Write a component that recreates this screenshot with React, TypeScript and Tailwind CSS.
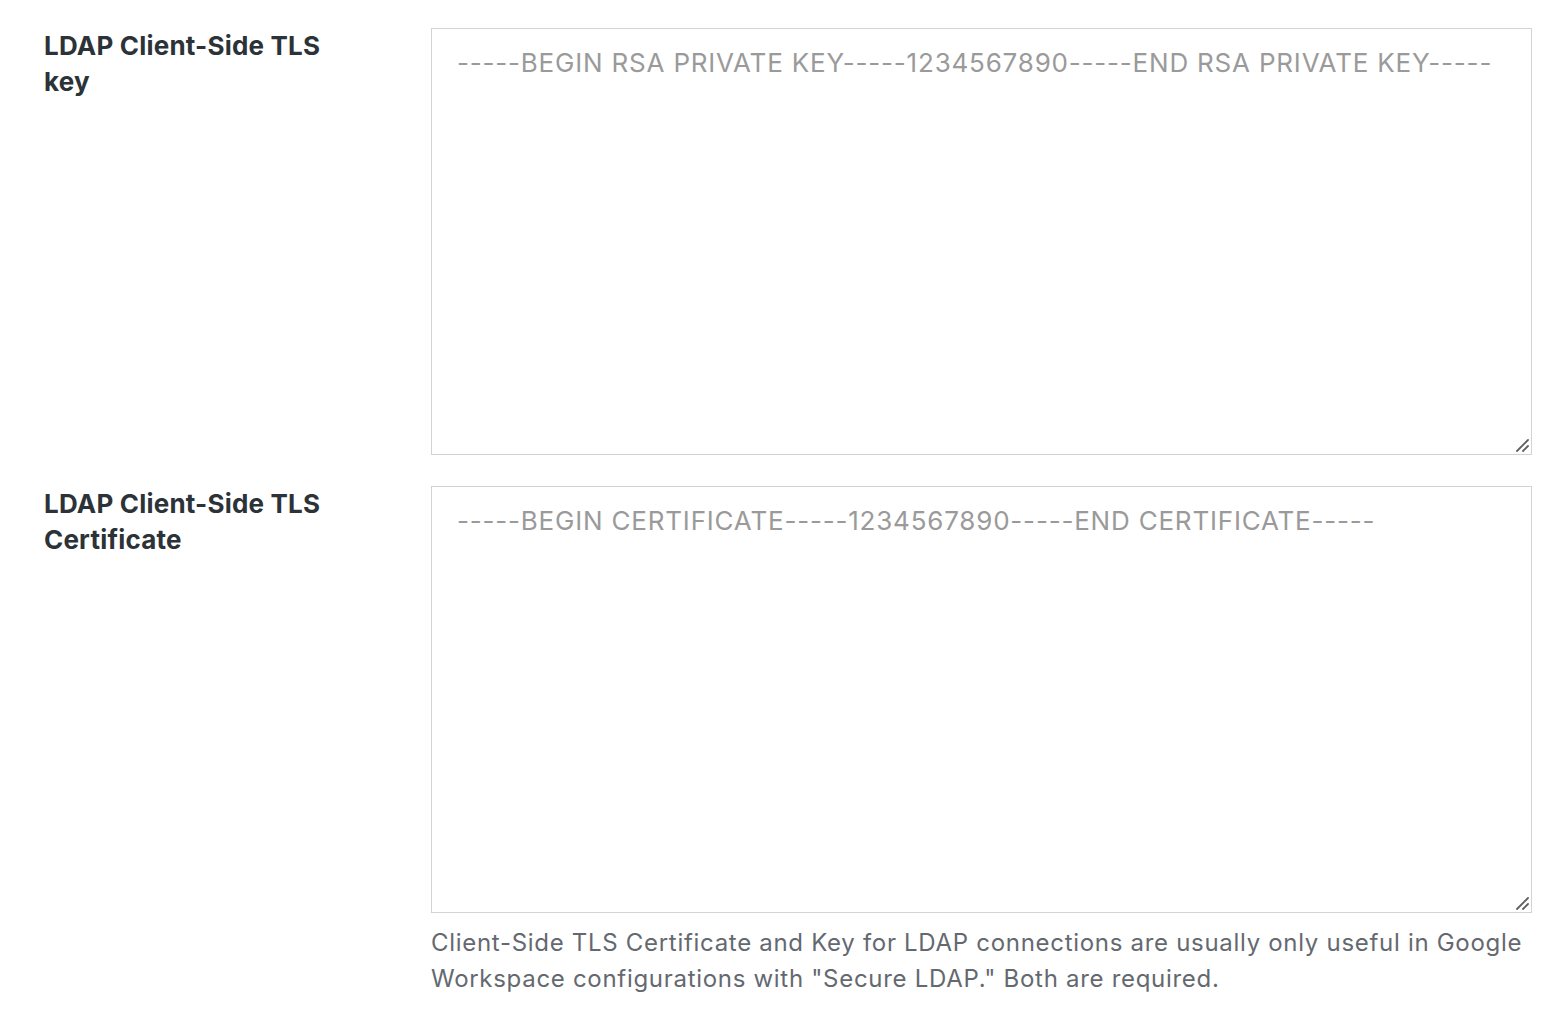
function ResizeGrip() {
  return (
    <svg
      className="pointer-events-none absolute bottom-[3px] right-[3px]"
      width="14"
      height="14"
      viewBox="0 0 14 14"
    >
      <path d="M2 13 L13 2 M8 13 L13 8" stroke="#5f5f5f" strokeWidth="1.8" strokeLinecap="round" />
    </svg>
  )
}

function KeyArea({ placeholder }: { placeholder: string }) {
  return (
    <div className="relative w-[1101px]">
      <textarea
        className="block h-[427px] w-[1101px] resize-none border border-[#d0d3d8] px-[25px] py-[16px] text-[26px] leading-[36px] tracking-[0.8px] text-[#2c3338] outline-none placeholder:text-[#9a9a9a]"
        placeholder={placeholder}
      />
      <ResizeGrip />
    </div>
  )
}

export default function App() {
  return (
    <div className="min-h-screen bg-white pl-[44px] pt-[28px] font-['Inter',sans-serif] text-[#2c3338]">
      <div className="flex">
        <div className="w-[387px] shrink-0 pr-[80px] text-[26px] font-bold leading-[36px] tracking-[0.2px] text-[#2c3338]">
          LDAP Client-Side TLS key
        </div>
        <KeyArea placeholder="-----BEGIN RSA PRIVATE KEY-----1234567890-----END RSA PRIVATE KEY-----" />
      </div>
      <div className="mt-[31px] flex">
        <div className="w-[387px] shrink-0 pr-[80px] text-[26px] font-bold leading-[36px] tracking-[0.2px] text-[#2c3338]">
          LDAP Client-Side TLS Certificate
        </div>
        <div className="w-[1101px]">
          <KeyArea placeholder="-----BEGIN CERTIFICATE-----1234567890-----END CERTIFICATE-----" />
          <p className="mt-[12px] text-[24px] leading-[36px] tracking-[0.7px] text-[#646970]">
            Client-Side TLS Certificate and Key for LDAP connections are usually only useful in Google Workspace configurations with "Secure LDAP." Both are required.
          </p>
        </div>
      </div>
    </div>
  )
}
